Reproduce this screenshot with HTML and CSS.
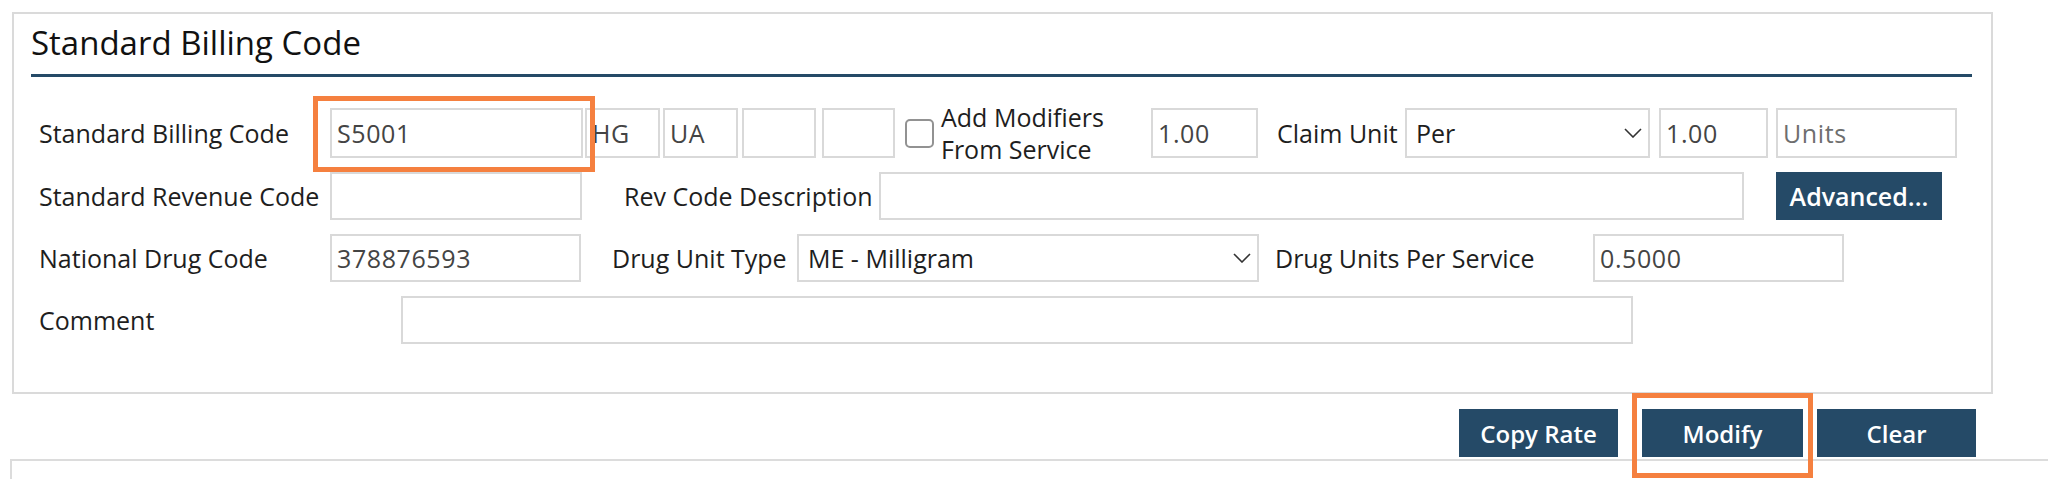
FILE: index.html
```html
<!DOCTYPE html>
<html lang="en">
<head>
<meta charset="utf-8">
<title>Standard Billing Code</title>
<link rel="stylesheet" href="styles.css">
</head>
<body>
<div class="page">
  <section class="panel">
    <header class="panel-head"><h2 class="panel-title">Standard Billing Code</h2></header>
    <div class="rows">
      <div class="row row-first">
        <label class="lbl lbl-col">Standard Billing Code</label>
        <span class="hl-wrap w-code">
          <input class="field w-code" value="S5001">
          <span class="highlight hl-code"></span>
        </span>
        <input class="field w-mod1 ml-2" value="HG">
        <input class="field w-mod2 ml-3" value="UA">
        <input class="field w-mod3 ml-4" value="">
        <input class="field w-mod4 ml-6" value="">
        <span class="checkbox"></span>
        <span class="check-text">Add Modifiers<br>From Service</span>
        <input class="field w-qty" value="1.00">
        <label class="lbl lbl-claim">Claim Unit</label>
        <div class="select w-per"><span>Per</span><svg class="chev" viewBox="0 0 18 10"><path d="M1 1 L9 9 L17 1"/></svg></div>
        <input class="field w-rate ml-9" value="1.00">
        <input class="field w-units ml-8 placeholder" value="Units">
      </div>
      <div class="row">
        <label class="lbl lbl-col">Standard Revenue Code</label>
        <input class="field w-rev" value="">
        <label class="lbl lbl-revdesc">Rev Code Description</label>
        <input class="field w-revdesc" value="">
        <button class="btn btn-adv">Advanced...</button>
      </div>
      <div class="row">
        <label class="lbl lbl-col">National Drug Code</label>
        <input class="field w-ndc" value="378876593">
        <label class="lbl lbl-dut">Drug Unit Type</label>
        <div class="select w-dut"><span>ME - Milligram</span><svg class="chev" viewBox="0 0 18 10"><path d="M1 1 L9 9 L17 1"/></svg></div>
        <label class="lbl lbl-dups">Drug Units Per Service</label>
        <input class="field w-dups" value="0.5000">
      </div>
      <div class="row">
        <label class="lbl lbl-comment">Comment</label>
        <input class="field w-comment" value="">
      </div>
    </div>
  </section>
  <div class="actions">
    <button class="btn btn-copy">Copy Rate</button>
    <span class="hl-wrap btn-modify-wrap">
      <button class="btn btn-modify">Modify</button>
      <span class="highlight hl-modify"></span>
    </span>
    <button class="btn btn-clear">Clear</button>
  </div>
  <div class="next-panel"></div>
</div>
</body>
</html>
```

FILE: styles.css
```css
html, body {
  margin: 0;
  padding: 0;
  background: #ffffff;
  overflow: hidden;
}

body {
  font-family: "Open Sans", "Noto Sans", sans-serif;
  font-size: 25px;
  color: #1e1e1e;
}

.page {
  padding: 12px 0 0 12px;
}

.panel {
  box-sizing: border-box;
  width: 1981px;
  height: 382px;
  border: 2px solid #dadada;
  padding: 0 19px 0 17px;
}

.panel-head {
  padding: 9px 0 11px;
  border-bottom: 3px solid #254a67;
}

.panel-title {
  margin: 0;
  font-size: 33px;
  line-height: 40px;
  font-weight: 500;
  color: #111;
}

.rows {
  margin-top: 31px;
  padding-left: 8px;
  display: flex;
  flex-direction: column;
  gap: 14px;
}

.row {
  display: flex;
  align-items: center;
  height: 48px;
}

.row-first {
  height: 50px;
}

.lbl {
  flex: none;
  white-space: nowrap;
  line-height: 32px;
  color: #1e1e1e;
}

.lbl-col { width: 291px; }
.lbl-comment { width: 362px; }
.lbl-claim { width: 128px; margin-left: 19px; }
.lbl-revdesc { width: 255px; margin-left: 42px; }
.lbl-dut { width: 185px; margin-left: 31px; }
.lbl-dups { width: 318px; margin-left: 16px; }

.field {
  flex: none;
  box-sizing: border-box;
  height: 48px;
  margin: 0;
  border: 2px solid #d9d9d9;
  border-radius: 0;
  padding: 0 5px;
  background: #fff;
  font-family: inherit;
  font-size: 25px;
  letter-spacing: 0.6px;
  color: #444;
  outline: none;
}

.row-first .field { height: 50px; }

.placeholder { color: #6e6e6e; }

.ml-2 { margin-left: 2px; }
.ml-3 { margin-left: 3px; }
.ml-4 { margin-left: 4px; }
.ml-6 { margin-left: 6px; }
.ml-8 { margin-left: 8px; }
.ml-9 { margin-left: 9px; }

.w-code { width: 253px; }
.w-mod1 { width: 75px; }
.w-mod2 { width: 75px; }
.w-mod3 { width: 74px; }
.w-mod4 { width: 73px; }
.w-qty { width: 107px; }
.w-per { width: 245px; }
.w-rate { width: 109px; }
.w-units { width: 181px; }
.w-rev { width: 252px; }
.w-revdesc { width: 865px; }
.w-ndc { width: 251px; }
.w-dut { width: 462px; }
.w-dups { width: 251px; }
.w-comment { width: 1232px; }

.hl-wrap {
  position: relative;
  display: inline-flex;
  flex: none;
}

.highlight {
  position: absolute;
  border: 5px solid #f5803f;
  pointer-events: none;
}

.hl-code {
  left: -17px;
  right: -12px;
  top: -12px;
  bottom: -14px;
}

.checkbox {
  flex: none;
  box-sizing: border-box;
  width: 29px;
  height: 29px;
  margin-left: 10px;
  border: 2px solid #929292;
  border-radius: 5px;
  background: #fff;
}

.check-text {
  flex: none;
  width: 210px;
  margin-left: 7px;
  line-height: 32px;
  color: #1e1e1e;
}

.select {
  flex: none;
  box-sizing: border-box;
  height: 48px;
  border: 2px solid #d9d9d9;
  padding: 0 6px 0 9px;
  display: flex;
  align-items: center;
  justify-content: space-between;
  color: #1e1e1e;
  background: #fff;
}

.row-first .select { height: 50px; }

.chev {
  width: 18px;
  height: 10px;
  fill: none;
  stroke: #333;
  stroke-width: 1.6;
}

.btn {
  flex: none;
  box-sizing: border-box;
  height: 48px;
  border: none;
  margin: 0;
  padding: 0;
  background: #254a67;
  color: #fff;
  font-family: inherit;
  font-size: 24px;
  font-weight: 600;
}

.btn-adv {
  width: 166px;
  margin-left: 32px;
  font-size: 25px;
}

.actions {
  box-sizing: border-box;
  width: 1981px;
  margin-top: 15px;
  padding-right: 17px;
  display: flex;
  justify-content: flex-end;
  align-items: center;
}

.btn-copy { width: 159px; }
.btn-modify-wrap { margin-left: 24px; }
.btn-modify { width: 161px; }
.btn-clear { width: 159px; margin-left: 14px; }

.hl-modify {
  left: -10px;
  right: -10px;
  top: -16px;
  bottom: -21px;
}

.next-panel {
  margin-top: 2px;
  margin-left: -2px;
  height: 40px;
  border-top: 2px solid #dcdcdc;
  border-left: 2px solid #dcdcdc;
}
```
